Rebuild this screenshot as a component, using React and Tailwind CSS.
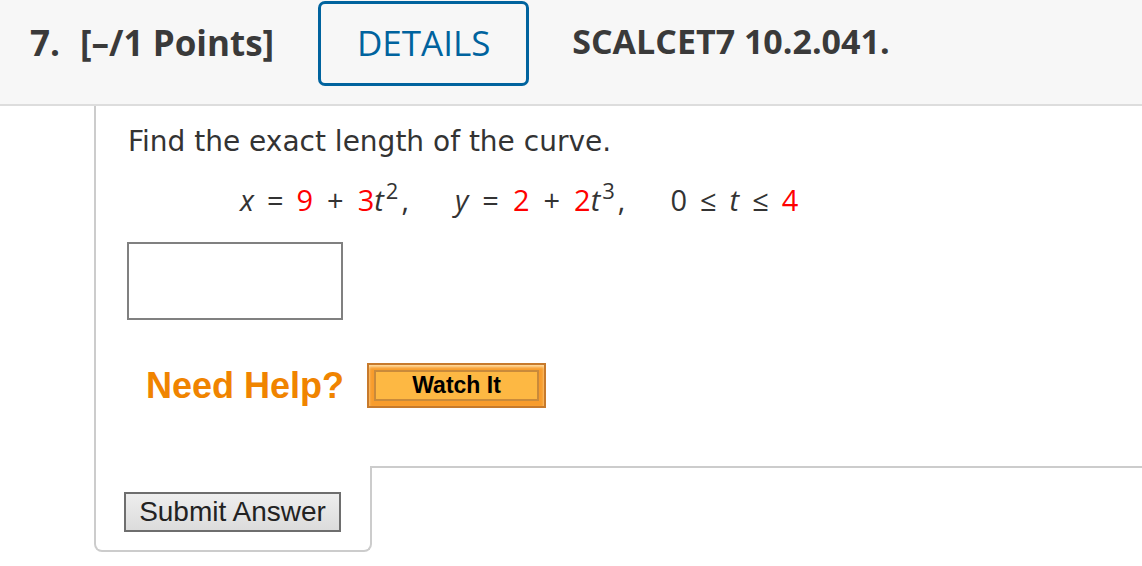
import React from 'react';

const Red = ({ children }) => <span className="text-[#ff0000]">{children}</span>;

const Equation = () => (
  <div className="ml-[112px] mt-[15px] flex items-baseline text-[29px] text-[#333333] [font-family:'Open_Sans',sans-serif]">
    <span className="italic">x</span>
    <span className="mx-[13px]">=</span>
    <Red>9</Red>
    <span className="mx-[14px]">+</span>
    <Red>3</Red>
    <span className="italic">t</span>
    <sup className="ml-[2px] text-[22px] -top-[0.55em]">2</sup>
    <span className="ml-[3px]">,</span>
    <span className="ml-[46px] italic">y</span>
    <span className="mx-[14px]">=</span>
    <Red>2</Red>
    <span className="mx-[14px]">+</span>
    <Red>2</Red>
    <span className="italic">t</span>
    <sup className="ml-[2px] text-[22px] -top-[0.55em]">3</sup>
    <span className="ml-[3px]">,</span>
    <span className="ml-[45px]">0</span>
    <span className="mx-[13px]">≤</span>
    <span className="italic">t</span>
    <span className="mx-[13px]">≤</span>
    <Red>4</Red>
  </div>
);

const App = () => {
  return (
    <div className="w-[1142px] h-[566px] bg-white overflow-hidden">
      <header className="h-[106px] bg-[#f7f7f7] border-b-2 border-[#dddddd] flex items-start text-[#3a3a3a] [font-family:'Open_Sans',sans-serif]">
        <div className="ml-[30px] mt-[17px] flex items-baseline font-bold text-[35px]">
          <span>7.</span>
          <span className="ml-[20px]">[–/1 Points]</span>
        </div>
        <button className="ml-[44px] mt-[1px] w-[211px] h-[85px] border-[3px] border-[#00639e] rounded-[7px] text-[#00639e] text-[35px]">
          DETAILS
        </button>
        <div className="ml-[43px] mt-[16px] font-bold text-[34px]">SCALCET7 10.2.041.</div>
      </header>

      <div className="ml-[94px]">
        <div className="h-[360px] border-l-2 border-[#cccccc] pl-[32px] pt-[15px]">
          <p className="text-[28px] text-[#333333] [font-family:'DejaVu_Sans',Verdana,sans-serif]">
            Find the exact length of the curve.
          </p>
          <Equation />
          <input
            type="text"
            className="mt-[20px] -ml-[1px] block w-[216px] h-[78px] border-2 border-[#808080] bg-white outline-none"
          />
          <div className="mt-[39px] flex items-center">
            <span className="ml-[18px] text-[36px] font-bold text-[#f08400] [font-family:'Liberation_Sans',Arial,sans-serif]">
              Need Help?
            </span>
            <button className="ml-[23px] w-[179px] h-[45px] border-2 border-[#c77a2c] bg-[#f89c2c] p-[5px] shadow-[inset_0_2px_3px_rgba(255,230,180,0.9)]">
              <span className="flex h-full items-center justify-center border-2 border-[#c98a3a] bg-[#fdb843] text-[23px] font-bold text-black [font-family:'Liberation_Sans',Arial,sans-serif]">
                Watch It
              </span>
            </button>
          </div>
        </div>
        <div className="flex">
          <div className="w-[278px] h-[86px] border-l-2 border-b-2 border-r-2 border-[#cccccc] rounded-b-[8px] pl-[28px] pt-[26px]">
            <button className="w-[217px] h-[40px] border-2 border-[#6e6e6e] bg-gradient-to-b from-[#eeeeee] to-[#dcdcdc] text-[28px] text-[#222222] leading-none [font-family:'Liberation_Sans',Arial,sans-serif]">
              Submit Answer
            </button>
          </div>
          <div className="flex-1 border-t-2 border-[#cccccc]"></div>
        </div>
      </div>
    </div>
  );
};

export default App;
